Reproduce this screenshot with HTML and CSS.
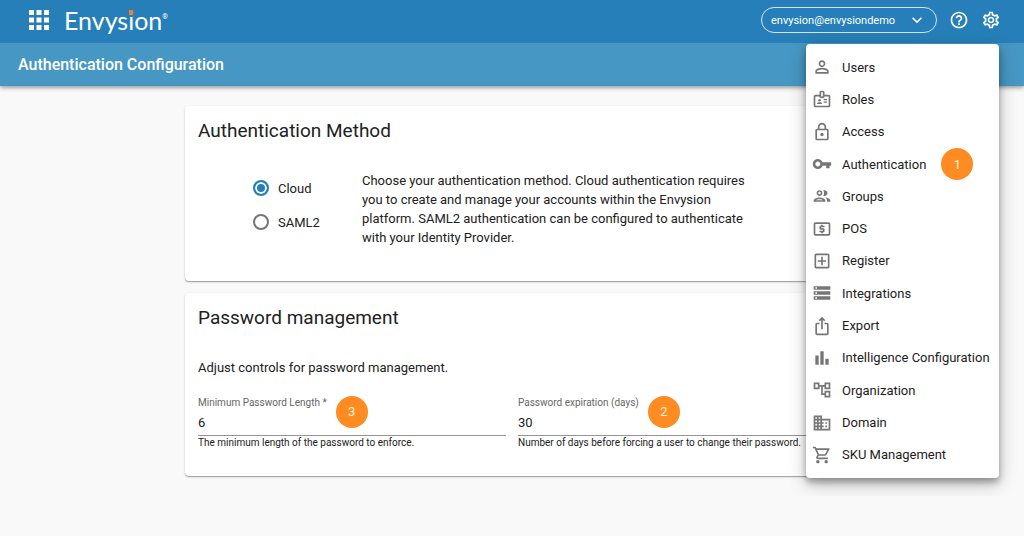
FILE: index.html
```
<!DOCTYPE html>
<html lang="en">
<head>
    <meta charset="UTF-8">
    <meta name="viewport" content="width=device-width, initial-scale=1.0">
    <title>Envysion - Authentication Configuration</title>
    <link rel="stylesheet" href="styles.css">
</head>
<body>
    <header class="topbar">
        <button class="icon-btn apps" aria-label="Apps">
            <svg viewBox="0 0 20 20"><path d="M0 0h5v5H0zM7.500 0h5v5h-5zM15 0h5v5h-5zM0 7.500h5v5H0zM7.500 7.500h5v5h-5zM15 7.500h5v5h-5zM0 15h5v5H0zM7.500 15h5v5h-5zM15 15h5v5h-5z"/></svg>
        </button>
        <a href="#" class="logo">Envys<span class="logo-i">i</span>on<sup>®</sup></a>

        <div class="account">
            <select aria-label="Account">
                <option>envysion@envysiondemo</option>
            </select>
            <svg viewBox="0 0 24 24"><path d="M7.410 8.590 12 13.170l4.590-4.580L18 10l-6 6-6-6z"/></svg>
        </div>
        <button class="icon-btn" aria-label="Help">
            <svg viewBox="0 0 24 24"><path d="M11 18h2v-2h-2v2zm1-16C6.480 2 2 6.480 2 12s4.480 10 10 10 10-4.480 10-10S17.520 2 12 2zm0 18c-4.410 0-8-3.590-8-8s3.590-8 8-8 8 3.590 8 8-3.590 8-8 8zm0-14c-2.210 0-4 1.790-4 4h2c0-1.100.9-2 2-2s2 .9 2 2c0 2-3 1.750-3 5h2c0-2.250 3-2.500 3-5 0-2.210-1.790-4-4-4z"/></svg>
        </button>
        <button class="icon-btn" aria-label="Settings">
            <svg viewBox="0 0 24 24"><path d="M19.430 12.980c.04-.32.07-.64.07-.98s-.03-.66-.07-.98l2.110-1.650c.19-.15.24-.42.12-.64l-2-3.460c-.09-.16-.26-.25-.44-.25-.06 0-.12.010-.17.030l-2.490 1c-.52-.4-1.080-.73-1.690-.98l-.38-2.650C14.460 2.180 14.250 2 14 2h-4c-.25 0-.46.18-.49.42l-.38 2.650c-.61.25-1.170.59-1.690.98l-2.490-1c-.06-.02-.12-.03-.18-.03-.17 0-.34.09-.43.25l-2 3.460c-.13.22-.07.49.12.64l2.110 1.650c-.04.32-.07.65-.07.98s.03.66.07.98l-2.110 1.650c-.19.15-.24.42-.12.64l2 3.460c.09.16.26.25.44.25.06 0 .12-.01.17-.03l2.490-1c.52.4 1.080.73 1.690.98l.38 2.650c.03.24.24.42.49.42h4c.25 0 .46-.18.49-.42l.38-2.650c.61-.25 1.170-.59 1.690-.98l2.490 1c.06.02.12.03.18.03.17 0 .34-.09.43-.25l2-3.460c.12-.22.07-.49-.12-.64l-2.110-1.650zm-1.980-1.710c.04.31.05.52.05.73 0 .21-.02.43-.05.73l-.14 1.130.89.7 1.080.84-.7 1.210-1.270-.51-1.040-.42-.9.68c-.43.32-.84.56-1.250.73l-1.060.43-.16 1.130-.2 1.350h-1.400l-.19-1.350-.16-1.130-1.060-.43c-.43-.18-.83-.41-1.230-.71l-.91-.7-1.060.43-1.270.51-.7-1.210 1.080-.84.89-.7-.14-1.130c-.03-.31-.05-.54-.05-.74s.02-.43.05-.73l.14-1.130-.89-.7-1.080-.84.7-1.210 1.270.51 1.040.42.9-.68c.43-.32.84-.56 1.250-.73l1.060-.43.16-1.130.2-1.350h1.390l.19 1.350.16 1.130 1.060.43c.43.18.83.41 1.230.71l.91.7 1.060-.43 1.270-.51.7 1.210-1.070.85-.89.7.14 1.130zM12 8c-2.210 0-4 1.790-4 4s1.790 4 4 4 4-1.790 4-4-1.790-4-4-4zm0 6c-1.100 0-2-.9-2-2s.9-2 2-2 2 .9 2 2-.9 2-2 2z"/></svg>
        </button>

        <!-- settings menu -->
        <nav class="menu">
            <a href="#"><svg viewBox="0 0 24 24"><path d="M12 5.900a2.100 2.100 0 1 1 0 4.200 2.100 2.100 0 0 1 0-4.200m0 9c2.970 0 6.100 1.460 6.100 2.100v1.100H5.900V17c0-.64 3.130-2.100 6.100-2.100M12 4C9.790 4 8 5.790 8 8s1.790 4 4 4 4-1.790 4-4-1.790-4-4-4zm0 9c-2.670 0-8 1.340-8 4v3h16v-3c0-2.660-5.330-4-8-4z"/></svg>Users</a>
            <a href="#"><svg viewBox="0 0 24 24"><path d="M20 7h-5V4c0-1.100-.9-2-2-2h-2c-1.100 0-2 .9-2 2v3H4c-1.100 0-2 .9-2 2v11c0 1.100.9 2 2 2h16c1.100 0 2-.9 2-2V9c0-1.100-.9-2-2-2zM11 4h2v5h-2V4zm9 16H4V9h5c0 1.100.9 2 2 2h2c1.100 0 2-.9 2-2h5v11z"/><circle cx="9" cy="13.500" r="1.500"/><path d="M11.080 16.180C10.440 15.900 9.740 15.750 9 15.750s-1.440.15-2.080.43c-.56.240-.92.780-.92 1.390V18h6v-.43c0-.61-.36-1.150-.92-1.390zM14 15h4v1.500h-4zM14 12h4v1.500h-4z"/></svg>Roles</a>
            <a href="#"><svg viewBox="0 0 24 24"><path d="M18 8h-1V6c0-2.760-2.240-5-5-5S7 3.240 7 6v2H6c-1.100 0-2 .9-2 2v10c0 1.100.9 2 2 2h12c1.100 0 2-.9 2-2V10c0-1.100-.9-2-2-2zM9 6c0-1.660 1.340-3 3-3s3 1.340 3 3v2H9V6zm9 14H6V10h12v10zm-6-3c1.100 0 2-.9 2-2s-.9-2-2-2-2 .9-2 2 .9 2 2 2z"/></svg>Access</a>
            <a href="#"><svg viewBox="0 0 24 24"><path d="M12.650 10C11.830 7.670 9.610 6 7 6c-3.310 0-6 2.690-6 6s2.690 6 6 6c2.610 0 4.830-1.670 5.650-4H17v3h4v-3h2v-4H12.650zM7 15c-1.650 0-3-1.350-3-3s1.350-3 3-3 3 1.350 3 3-1.350 3-3 3z"/></svg>Authentication<span class="badge">1</span></a>
            <a href="#"><svg viewBox="0 0 24 24"><path d="M9 13.750c-2.340 0-7 1.170-7 3.500V19h14v-1.750c0-2.330-4.660-3.500-7-3.500zM4.340 17c.84-.58 2.870-1.250 4.660-1.250s3.820.67 4.660 1.250H4.340zM9 12c1.930 0 3.500-1.570 3.500-3.500S10.930 5 9 5 5.500 6.570 5.500 8.500 7.070 12 9 12zm0-5c.83 0 1.500.67 1.500 1.500S9.830 10 9 10s-1.500-.67-1.500-1.500S8.170 7 9 7zm7.040 6.810c1.160.84 1.960 1.960 1.960 3.440V19h4v-1.750c0-2.020-3.500-3.170-5.960-3.440zM15 12c1.930 0 3.500-1.570 3.500-3.500S16.930 5 15 5c-.54 0-1.040.13-1.500.35.63.89 1 1.980 1 3.150s-.37 2.260-1 3.150c.46.22.96.35 1.500.35z"/></svg>Groups</a>
            <a href="#"><svg viewBox="0 0 24 24"><path d="M11 17h2v-1h1c.55 0 1-.45 1-1v-3c0-.55-.45-1-1-1h-3v-1h4V8h-2V7h-2v1h-1c-.55 0-1 .45-1 1v3c0 .55.45 1 1 1h3v1H9v2h2v1zm9-13H4c-1.110 0-2 .89-2 2v12c0 1.110.89 2 2 2h16c1.110 0 2-.89 2-2V6c0-1.110-.89-2-2-2zm0 14H4V6h16v12z"/></svg>POS</a>
            <a href="#"><svg viewBox="0 0 24 24"><path d="M19 3H5c-1.110 0-2 .9-2 2v14c0 1.100.89 2 2 2h14c1.100 0 2-.9 2-2V5c0-1.100-.9-2-2-2zm0 16H5V5h14v14zm-8-2h2v-4h4v-2h-4V7h-2v4H7v2h4z"/></svg>Register</a>
            <a href="#"><svg viewBox="0 0 24 24"><path d="M2 20h20v-4H2v4zm2-3h2v2H4v-2zM2 4v4h20V4H2zm4 3H4V5h2v2zm-4 7h20v-4H2v4zm2-3h2v2H4v-2z"/></svg>Integrations</a>
            <a href="#"><svg viewBox="0 0 24 24"><path d="m16 5-1.420 1.420-1.590-1.590V16h-1.980V4.830L9.420 6.420 8 5l4-4 4 4zm4 5v11c0 1.100-.9 2-2 2H6c-1.110 0-2-.9-2-2V10c0-1.110.89-2 2-2h3v2H6v11h12V10h-3V8h3c1.100 0 2 .89 2 2z"/></svg>Export</a>
            <a href="#"><svg viewBox="0 0 24 24"><path d="M4 9h4v11H4zM16 13h4v7h-4zM10 4h4v16h-4z"/></svg>Intelligence Configuration</a>
            <a href="#"><svg viewBox="0 0 24 24"><path d="M22 11V3h-7v3H9V3H2v8h7V8h2v10h4v3h7v-8h-7v3h-2V8h2v3h7zM7 9H4V5h3v4zm10 6h3v4h-3v-4zm0-10h3v4h-3V5z"/></svg>Organization</a>
            <a href="#"><svg viewBox="0 0 24 24"><path d="M12 7V3H2v18h20V7H12zM6 19H4v-2h2v2zm0-4H4v-2h2v2zm0-4H4V9h2v2zm0-4H4V5h2v2zm4 12H8v-2h2v2zm0-4H8v-2h2v2zm0-4H8V9h2v2zm0-4H8V5h2v2zm10 12h-8v-2h2v-2h-2v-2h2v-2h-2V9h8v10zm-2-8h-2v2h2v-2zm0 4h-2v2h2v-2z"/></svg>Domain</a>
            <a href="#"><svg viewBox="0 0 24 24"><path d="M15.550 13c.75 0 1.410-.41 1.750-1.030l3.580-6.490A.996.996 0 0 0 20.010 4H5.210l-.94-2H1v2h2l3.600 7.590-1.350 2.440C4.520 15.370 5.480 17 7 17h12v-2H7l1.100-2h7.450zM6.160 6h12.150l-2.760 5H8.530L6.160 6zM7 18c-1.100 0-1.990.9-1.990 2S5.900 22 7 22s2-.9 2-2-.9-2-2-2zm10 0c-1.100 0-1.990.9-1.990 2s.89 2 1.990 2 2-.9 2-2-.9-2-2-2z"/></svg>SKU Management</a>
        </nav>
    </header>

    <div class="subbar">
        <h1>Authentication Configuration</h1>
    </div>

    <main class="content">
        <section class="card">
            <h2>Authentication Method</h2>
            <div class="method">
                <div class="radios">
                    <label><input type="radio" name="method" value="cloud" checked>Cloud</label>
                    <label><input type="radio" name="method" value="saml2">SAML2</label>
                </div>
                <p>Choose your authentication method. Cloud authentication requires you to create and manage your accounts within the Envysion platform. SAML2 authentication can be configured to authenticate with your Identity Provider.</p>
            </div>
        </section>

        <section class="card">
            <h2>Password management</h2>
            <p class="intro">Adjust controls for password management.</p>
            <div class="fields">
                <div class="field">
                    <div class="field-label">
                        <label for="min-length">Minimum Password Length *</label>
                        <span class="badge">3</span>
                    </div>
                    <input type="text" inputmode="numeric" id="min-length" value="6" required>
                    <div class="hint">The minimum length of the password to enforce.</div>
                </div>
                <div class="field">
                    <div class="field-label">
                        <label for="expiration">Password expiration (days)</label>
                        <span class="badge">2</span>
                    </div>
                    <input type="text" inputmode="numeric" id="expiration" value="30">
                    <div class="hint">Number of days before forcing a user to change their password.</div>
                </div>
            </div>
        </section>
    </main>
</body>
</html>
```
FILE: styles.css
```
* {
    margin: 0;
    padding: 0;
    box-sizing: border-box;
    font-family: Roboto, sans-serif;
}

body {
    background: #f9f9f9;
    color: #212121;
    font-size: 13px;
}

svg {
    display: block;
    fill: currentColor;
}

.topbar {
    position: relative;
    z-index: 2;
    display: flex;
    align-items: center;
    height: 43px;
    padding: 0 23px 3px 29px;
    background: #267fb8;
    color: white;
}

.icon-btn {
    background: none;
    border: none;
    color: white;
    cursor: pointer;
    margin-left: 12px;
}

.icon-btn svg {
    width: 20px;
    height: 20px;
}

.icon-btn.apps {
    margin-left: 0;
}

.logo {
    color: white;
    text-decoration: none;
    font-family: Lato, sans-serif;
    font-size: 25px;
    line-height: 30px;
    margin-left: 15px;
}

.logo sup {
    font-size: 7px;
    line-height: 7px;
    vertical-align: 11px;
}

.logo-i {
    position: relative;
    font-family: inherit;
}

/* orange dot over the i */
.logo-i::after {
    content: "";
    position: absolute;
    top: 5px;
    left: 1px;
    width: 4px;
    height: 5px;
    background: #f5802a;
}

.account {
    display: grid;
    align-items: center;
    margin-left: auto;
}

.account select,
.account svg {
    grid-area: 1 / 1;
}

.account select {
    appearance: none;
    width: 176px;
    height: 26px;
    padding: 0 32px 0 9px;
    border: 1px solid #d5e6f2;
    border-radius: 13px;
    background: transparent;
    color: white;
    font-size: 11px;
}

.account svg {
    justify-self: end;
    width: 20px;
    height: 20px;
    margin-right: 10px;
    pointer-events: none;
}

.menu {
    position: absolute;
    top: 44px;
    right: 25px;
    display: grid;
    grid-auto-rows: 1fr;
    min-width: 193px;
    min-height: 434px;
    padding: 7px 6px;
    background: white;
    border-radius: 4px;
    box-shadow: 0 4px 6px rgba(0, 0, 0, 0.3), 0 6px 18px rgba(0, 0, 0, 0.25);
}

.menu a {
    display: flex;
    align-items: center;
    color: #1c1c1c;
    font-size: 13px;
    text-decoration: none;
    white-space: nowrap;
}

.menu a:hover {
    background: #f5f5f5;
}

.menu svg {
    width: 20px;
    height: 20px;
    margin-right: 10px;
    color: #757575;
}

.badge {
    display: flex;
    align-items: center;
    justify-content: center;
    width: 32px;
    height: 32px;
    border-radius: 50%;
    background: #ff8c22;
    color: #fff1dc;
    font-size: 13px;
}

.menu .badge {
    margin-left: 15px;
}

.subbar {
    position: relative;
    z-index: 1;
    display: flex;
    align-items: center;
    height: 43px;
    padding: 0 18px;
    background: #4797c4;
    color: white;
    box-shadow: 0 1px 5px rgba(0, 0, 0, 0.5);
}

h1 {
    font-size: 16px;
    font-weight: 500;
}

.content {
    display: flex;
    flex-direction: column;
    gap: 12px;
    max-width: 654px;
    margin: 20px auto;
}

.card {
    padding: 13px;
    background: white;
    border-radius: 4px;
    box-shadow: 0 1px 1px rgba(0, 0, 0, 0.3), 0 1px 3px rgba(0, 0, 0, 0.12);
}

h2 {
    font-size: 19px;
    font-weight: 400;
    line-height: 24px;
}

.method {
    display: flex;
    padding: 28px 60px 21px 55px;
}

.radios {
    flex: none;
    width: 109px;
}

.radios label {
    display: flex;
    align-items: center;
    gap: 9px;
    height: 34px;
}

.radios input {
    appearance: none;
    width: 16px;
    height: 16px;
    border: 2px solid #757575;
    border-radius: 50%;
}

.radios input:checked {
    border-color: #267fb8;
    background: #267fb8;
    box-shadow: inset 0 0 0 2px white;
}

.method p {
    line-height: 19px;
}

.intro {
    line-height: 20px;
    margin-top: 28px;
}

.fields {
    display: grid;
    grid-template-columns: 1fr 1fr;
    gap: 12px;
    margin-top: 16px;
    padding-bottom: 13px;
}

.field-label {
    display: inline-block;
    position: relative;
    color: #666;
    font-size: 10px;
    line-height: 14px;
}

.field .badge {
    position: absolute;
    top: 0;
    left: calc(100% + 9px);
}

.field input {
    display: block;
    width: 100%;
    height: 26px;
    border: none;
    border-bottom: 1px solid #949494;
    background: transparent;
    color: #212121;
    font-size: 13px;
}

.hint {
    font-size: 10px;
    line-height: 14px;
    white-space: nowrap;
}
```
